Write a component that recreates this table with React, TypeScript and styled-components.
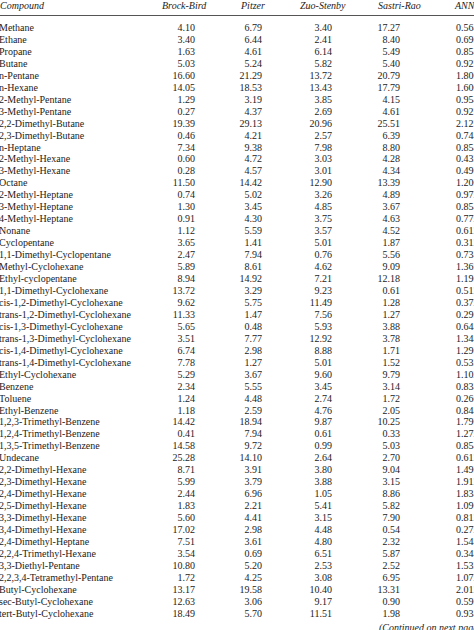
import React from 'react';
import styled, { createGlobalStyle } from 'styled-components';

const GlobalStyle = createGlobalStyle`
    html, body {
        margin: 0;
        padding: 0;
        background: #fff;
    }
    body {
        font-family: "Liberation Serif", "Times New Roman", serif;
        color: #1c1c1c;
    }
`;

const Page = styled.div`
    width: 474px;
    height: 630px;
    overflow: hidden;
    font-size: 10px;
`;

const HeaderRow = styled.div`
    display: grid;
    grid-template-columns: 162px 79px 59px 78px 77px 1fr;
    height: 15px;
    line-height: 11px;
    border-bottom: 1px solid #555;
    font-style: italic;
    white-space: nowrap;
`;

const HeaderCell = styled.div`
    text-align: left;
`;

const Body = styled.div`
    padding-top: 6px;
`;

const Row = styled.div`
    display: grid;
    grid-template-columns: 151px 44px 67px 70px 68px 1fr;
    height: 11.96px;
    line-height: 11.96px;
    white-space: nowrap;
`;

const NameCell = styled.div`
    text-align: left;
    margin-left: -1px;
`;

const ValueCell = styled.div<{ $last?: boolean }>`
    text-align: ${({ $last }) => ($last ? 'left' : 'right')};
    padding-left: ${({ $last }) => ($last ? '56px' : '0')};
`;

const Footer = styled.div`
    margin-top: 2px;
    padding-left: 379px;
    line-height: 12px;
    font-style: italic;
    white-space: nowrap;
`;

const headers = ['Compound', 'Brock-Bird', 'Pitzer', 'Zuo-Stenby', 'Sastri-Rao', 'ANN'];

const rows: string[][] = [
    ['Methane', '4.10', '6.79', '3.40', '17.27', '0.564'],
    ['Ethane', '3.40', '6.44', '2.41', '8.40', '0.696'],
    ['Propane', '1.63', '4.61', '6.14', '5.49', '0.854'],
    ['Butane', '5.03', '5.24', '5.82', '5.40', '0.925'],
    ['n-Pentane', '16.60', '21.29', '13.72', '20.79', '1.800'],
    ['n-Hexane', '14.05', '18.53', '13.43', '17.79', '1.600'],
    ['2-Methyl-Pentane', '1.29', '3.19', '3.85', '4.15', '0.954'],
    ['3-Methyl-Pentane', '0.27', '4.37', '2.69', '4.61', '0.925'],
    ['2,2-Dimethyl-Butane', '19.39', '29.13', '20.96', '25.51', '2.125'],
    ['2,3-Dimethyl-Butane', '0.46', '4.21', '2.57', '6.39', '0.744'],
    ['n-Heptane', '7.34', '9.38', '7.98', '8.80', '0.854'],
    ['2-Methyl-Hexane', '0.60', '4.72', '3.03', '4.28', '0.433'],
    ['3-Methyl-Hexane', '0.28', '4.57', '3.01', '4.34', '0.496'],
    ['Octane', '11.50', '14.42', '12.90', '13.39', '1.200'],
    ['2-Methyl-Heptane', '0.74', '5.02', '3.26', '4.89', '0.972'],
    ['3-Methyl-Heptane', '1.30', '3.45', '4.85', '3.67', '0.854'],
    ['4-Methyl-Heptane', '0.91', '4.30', '3.75', '4.63', '0.772'],
    ['Nonane', '1.12', '5.59', '3.57', '4.52', '0.612'],
    ['Cyclopentane', '3.65', '1.41', '5.01', '1.87', '0.312'],
    ['1,1-Dimethyl-Cyclopentane', '2.47', '7.94', '0.76', '5.56', '0.734'],
    ['Methyl-Cyclohexane', '5.89', '8.61', '4.62', '9.09', '1.365'],
    ['Ethyl-cyclopentane', '8.94', '14.92', '7.21', '12.18', '1.196'],
    ['1,1-Dimethyl-Cyclohexane', '13.72', '3.29', '9.23', '0.61', '0.512'],
    ['cis-1,2-Dimethyl-Cyclohexane', '9.62', '5.75', '11.49', '1.28', '0.372'],
    ['trans-1,2-Dimethyl-Cyclohexane', '11.33', '1.47', '7.56', '1.27', '0.296'],
    ['cis-1,3-Dimethyl-Cyclohexane', '5.65', '0.48', '5.93', '3.88', '0.644'],
    ['trans-1,3-Dimethyl-Cyclohexane', '3.51', '7.77', '12.92', '3.78', '1.344'],
    ['cis-1,4-Dimethyl-Cyclohexane', '6.74', '2.98', '8.88', '1.71', '1.296'],
    ['trans-1,4-Dimethyl-Cyclohexane', '7.78', '1.27', '5.01', '1.52', '0.533'],
    ['Ethyl-Cyclohexane', '5.29', '3.67', '9.60', '9.79', '1.102'],
    ['Benzene', '2.34', '5.55', '3.45', '3.14', '0.834'],
    ['Toluene', '1.24', '4.48', '2.74', '1.72', '0.266'],
    ['Ethyl-Benzene', '1.18', '2.59', '4.76', '2.05', '0.844'],
    ['1,2,3-Trimethyl-Benzene', '14.42', '18.94', '9.87', '10.25', '1.796'],
    ['1,2,4-Trimethyl-Benzene', '0.41', '7.94', '0.61', '0.33', '1.272'],
    ['1,3,5-Trimethyl-Benzene', '14.58', '9.72', '0.99', '5.03', '0.854'],
    ['Undecane', '25.28', '14.10', '2.64', '2.70', '0.612'],
    ['2,2-Dimethyl-Hexane', '8.71', '3.91', '3.80', '9.04', '1.496'],
    ['2,3-Dimethyl-Hexane', '5.99', '3.79', '3.88', '3.15', '1.912'],
    ['2,4-Dimethyl-Hexane', '2.44', '6.96', '1.05', '8.86', '1.834'],
    ['2,5-Dimethyl-Hexane', '1.83', '2.21', '5.41', '5.82', '1.096'],
    ['3,3-Dimethyl-Hexane', '5.60', '4.41', '3.15', '7.90', '0.812'],
    ['3,4-Dimethyl-Hexane', '17.02', '2.98', '4.48', '0.54', '0.272'],
    ['2,4-Dimethyl-Heptane', '7.51', '3.61', '4.80', '2.32', '1.544'],
    ['2,2,4-Trimethyl-Hexane', '3.54', '0.69', '6.51', '5.87', '0.344'],
    ['3,3-Diethyl-Pentane', '10.80', '5.20', '2.53', '2.52', '1.533'],
    ['2,2,3,4-Tetramethyl-Pentane', '1.72', '4.25', '3.08', '6.95', '1.072'],
    ['Butyl-Cyclohexane', '13.17', '19.58', '10.40', '13.31', '2.012'],
    ['sec-Butyl-Cyclohexane', '12.63', '3.06', '9.17', '0.90', '0.596'],
    ['tert-Butyl-Cyclohexane', '18.49', '5.70', '11.51', '1.98', '0.934'],
];

const App = () => {
    return (
        <>
            <GlobalStyle />
            <Page>
                <HeaderRow>
                    {headers.map((h) => (
                        <HeaderCell key={h}>{h}</HeaderCell>
                    ))}
                </HeaderRow>
                <Body>
                    {rows.map(([name, ...values]) => (
                        <Row key={name}>
                            <NameCell>{name}</NameCell>
                            {values.map((v, i) => (
                                <ValueCell key={i} $last={i === values.length - 1}>
                                    {v}
                                </ValueCell>
                            ))}
                        </Row>
                    ))}
                </Body>
                <Footer>(Continued on next page)</Footer>
            </Page>
        </>
    );
};

export default App;
